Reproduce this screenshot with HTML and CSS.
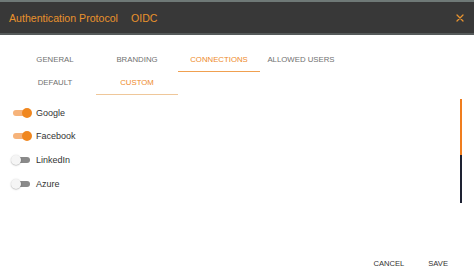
FILE: index.html
```html
<!DOCTYPE html>
<html>
<head>
<meta charset="utf-8">
<link rel="stylesheet" href="styles.css">
</head>
<body>
<div class="dialog">
  <div class="topstrip"></div>
  <header class="header">
    <span class="title">Authentication Protocol</span>
    <span class="title sub">OIDC</span>
    <span class="close">
      <svg width="8" height="8" viewBox="0 0 8 8"><path d="M1 1L7 7M7 1L1 7" stroke="#e8932f" stroke-width="1.3" stroke-linecap="round"/></svg>
    </span>
  </header>
  <nav class="tabs">
    <div class="tab">GENERAL</div>
    <div class="tab">BRANDING</div>
    <div class="tab active">CONNECTIONS</div>
    <div class="tab">ALLOWED USERS</div>
  </nav>
  <nav class="tabs tabs2">
    <div class="tab">DEFAULT</div>
    <div class="tab active">CUSTOM</div>
  </nav>
  <div class="content">
    <ul class="list">
      <li class="item"><span class="toggle on"><span class="thumb"></span></span>Google</li>
      <li class="item"><span class="toggle on"><span class="thumb"></span></span>Facebook</li>
      <li class="item"><span class="toggle"><span class="thumb"></span></span>LinkedIn</li>
      <li class="item"><span class="toggle"><span class="thumb"></span></span>Azure</li>
    </ul>
    <div class="scrollbar"><div class="sb-thumb"></div><div class="sb-rest"></div></div>
  </div>
  <footer class="footer">
    <button class="btn">CANCEL</button>
    <button class="btn">SAVE</button>
  </footer>
</div>
</body>
</html>
```
FILE: styles.css
```css
html, body { margin: 0; padding: 0; background: #fff; }
body { font-family: "Liberation Sans", Arial, sans-serif; width: 474px; height: 277px; overflow: hidden; }
.dialog { width: 474px; height: 277px; display: flex; flex-direction: column; background: #fff; }
.topstrip { height: 2px; background: #6f7977; }
.header { height: 31px; background: #383838; border-bottom: 2px solid #555a5a; display: flex; align-items: center; padding: 0 10px 0 9px; box-sizing: content-box; }
.title { color: #e8922c; font-size: 10.6px; }
.title.sub { margin-left: 13px; }
.close { margin-left: auto; display: flex; align-items: center; }
.tabs { display: flex; padding-left: 14px; margin-top: 14px; }
.tabs2 { margin-top: 0; }
.tab { width: 82px; height: 23px; line-height: 22px; text-align: center; font-size: 7.8px; color: #707070; box-sizing: border-box; }
.tab.active { color: #ee8a2a; border-bottom: 1.5px solid #f0a050; }
.tabs2 .tab.active { border-bottom: 1.5px solid #efc79a; }
.content { display: flex; flex: 1; }
.list { list-style: none; margin: 0; padding: 6px 0 0 13px; flex: 1; }
.item { display: flex; align-items: center; height: 23.6px; font-size: 9px; color: #333; }
.toggle { width: 17px; height: 6px; border-radius: 3px; background: #8a8a8a; position: relative; margin-right: 6px; }
.toggle .thumb { position: absolute; width: 10px; height: 10px; border-radius: 50%; top: -2px; left: -2px; background: #f5f5f5; box-shadow: 0 0.5px 1.5px rgba(0,0,0,0.35); }
.toggle.on { background: #f6b37a; }
.toggle.on .thumb { left: 9px; background: #f0871f; box-shadow: none; }
.scrollbar { width: 2px; margin: 4px 12px 0 0; height: 104px; display: flex; flex-direction: column; }
.sb-thumb { height: 56px; background: #f07d1e; }
.sb-rest { flex: 1; background: #1e2233; }
.footer { display: flex; justify-content: flex-end; padding: 0 26px 9px 0; gap: 24px; }
.btn { border: none; background: none; font-family: inherit; font-size: 7.6px; color: #333; padding: 0; }
```
